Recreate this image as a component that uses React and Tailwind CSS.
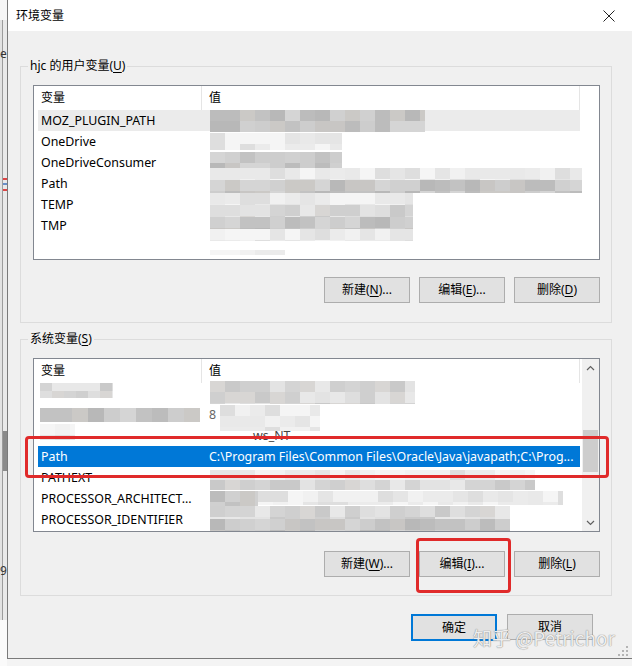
import React from 'react';

const PALETTES = {
  dark: ['#c2c2c2', '#cdcdcd', '#d5d5d5', '#bcbcbc', '#c8c6c4', '#d0d0d0', '#b8b8b8', '#cbc9c6'],
  mid: ['#d4d4d4', '#dedede', '#cfcfcf', '#e3e3e3', '#d8d6d4', '#e8e8e8', '#c9c9c9'],
  light: ['#ebebeb', '#f1f1f1', '#e5e5e5', '#f5f5f5', '#e9e9e9', '#dedede'],
};

// pixelated blur patch, lies over the list content
function Mosaic({ x, y, w, h, cw = 15, ch = 11, seed = 1, tone = 'mid' }) {
  const pal = PALETTES[tone];
  const cols = Math.ceil(w / cw);
  const rows = Math.ceil(h / ch);
  let s = seed * 7919;
  const next = () => {
    s = (s * 9301 + 49297) % 233280;
    return s / 233280;
  };
  const cells = [];
  for (let i = 0; i < cols * rows; i++) cells.push(pal[Math.floor(next() * pal.length)]);
  return (
    <div
      className="absolute grid overflow-hidden pointer-events-none"
      style={{ left: x, top: y, width: w, height: h, gridTemplateColumns: `repeat(${cols}, ${cw}px)`, gridAutoRows: `${ch}px` }}
    >
      {cells.map((c, i) => (
        <div key={i} style={{ background: c }} />
      ))}
    </div>
  );
}

function Key({ children }) {
  return <span className="underline underline-offset-[2px] decoration-[1px]">{children}</span>;
}

function Btn({ children, def }) {
  return (
    <div
      className={`w-[86px] h-[26px] flex items-center justify-center text-[12px] text-black bg-[#e1e1e1] ${
        def ? 'border-2 border-[#0078d7] h-[27px]' : 'border border-[#adadad]'
      }`}
    >
      {children}
    </div>
  );
}

function Header() {
  return (
    <div className="flex h-[24px] text-[12px] text-black">
      <div className="w-[168px] pl-[7px] flex items-center border-r border-[#e5e5e5]">变量</div>
      <div className="w-[378px] pl-[7px] flex items-center border-r border-[#e5e5e5]">值</div>
    </div>
  );
}

function Row({ name, value, selected, hover }) {
  return (
    <div
      className={`flex h-[21px] items-center ml-[4px] w-[542px] text-[12.4px] ${
        selected ? 'bg-[#0078d7] text-white' : hover ? 'bg-[#ebebeb] text-black' : 'text-black'
      }`}
    >
      <div className="w-[171px] pl-[3px] pt-[1px] whitespace-nowrap overflow-hidden">{name}</div>
      <div className="flex-1 pt-[1px] whitespace-nowrap overflow-hidden">{value}</div>
    </div>
  );
}

function Chevron({ up }) {
  return (
    <svg width="9" height="6" viewBox="0 0 9 6" fill="none" stroke="#606060" strokeWidth="1.2">
      {up ? <polyline points="1,5 4.5,1.5 8,5" /> : <polyline points="1,1 4.5,4.5 8,1" />}
    </svg>
  );
}

const USER_VARS = ['MOZ_PLUGIN_PATH', 'OneDrive', 'OneDriveConsumer', 'Path', 'TEMP', 'TMP'];

const SYS_VARS = [
  { name: '', value: '' },
  { name: '', value: <span className="text-[#666]">8</span> },
  { name: '', value: <span className="pl-[44px] text-[#444]">ws_NT</span> },
  { name: 'Path', value: 'C:\\Program Files\\Common Files\\Oracle\\Java\\javapath;C:\\Prog...', selected: true },
  { name: 'PATHEXT', value: '' },
  { name: 'PROCESSOR_ARCHITECT...', value: '' },
  { name: 'PROCESSOR_IDENTIFIER', value: '' },
];

function Group({ label, children, className }) {
  return (
    <fieldset className={`border border-[#dcdcdc] pl-[12px] pr-[11px] pt-[11px] ${className}`}>
      <legend className="-ml-[5px] px-[2px] text-[12px] leading-[16px] text-black">{label}</legend>
      {children}
    </fieldset>
  );
}

export default function App() {
  return (
    <div className="relative w-[632px] h-[666px] overflow-hidden flex bg-[#f4f4f4] font-['Noto_Sans','Noto_Sans_CJK_SC',sans-serif]">
      {/* window behind the dialog */}
      <div className="w-[7px] h-[666px] flex flex-col overflow-hidden">
        <div className="h-[20px] bg-[#f6f6f6]" />
        <div className="flex-1 flex">
          <div className="w-[2px] bg-[#e2e2e2]" />
          <div className="w-[1px] bg-[#9c9c9c]" />
          <div className="flex-1 flex flex-col bg-[#e9e9e9] text-[12px] leading-none text-[#333]">
            <div className="h-[28px]" />
            <div className="-ml-[3px]">e</div>
            <div className="h-[118px]" />
            <div className="h-[2px] bg-[#d44]" />
            <div className="h-[3px]" />
            <div className="h-[2px] bg-[#6a8fc8]" />
            <div className="h-[4px]" />
            <div className="h-[2px] bg-[#d44]" />
            <div className="h-[240px]" />
            <div className="h-[40px] bg-[#8a8a8a]" />
            <div className="h-[94px]" />
            <div className="-ml-[3px]">9</div>
          </div>
        </div>
        <div className="h-[46px] bg-[#fafafa]" />
      </div>

      {/* dialog */}
      <div className="w-[625px] h-[659px] flex flex-col border-l border-b border-[#7a7a7a] bg-[#f0f0f0]">
        <div className="h-[31px] bg-white flex items-center justify-between pl-[8px] pr-[17px] shrink-0">
          <span className="text-[12px] text-black">环境变量</span>
          <svg width="12" height="12" viewBox="0 0 12 12" stroke="#222" strokeWidth="1">
            <line x1="0.5" y1="0.5" x2="11.5" y2="11.5" />
            <line x1="11.5" y1="0.5" x2="0.5" y2="11.5" />
          </svg>
        </div>

        <div className="flex-1 flex flex-col pt-[27px] pl-[12px] pr-[20px]">
          <Group label={<>hjc 的用户变量(<Key>U</Key>)</>} className="pb-[19px]">
            <div className="relative h-[175px] border border-[#828790] bg-white overflow-hidden">
              <Header />
              {USER_VARS.map((v, i) => (
                <Row key={v} name={v} hover={i === 0} />
              ))}
              <Mosaic x={176} y={24} w={215} h={22} seed={3} tone="dark" />
              <Mosaic x={176} y={47} w={132} h={17} seed={5} tone="light" />
              <Mosaic x={176} y={66} w={132} h={16} seed={7} tone="dark" />
              <Mosaic x={176} y={82} w={372} h={12} seed={9} tone="light" />
              <Mosaic x={176} y={94} w={372} h={13} seed={11} tone="dark" />
              <Mosaic x={176} y={107} w={203} h={12} seed={13} tone="light" />
              <Mosaic x={176} y={119} w={203} h={12} seed={15} tone="mid" />
              <Mosaic x={176} y={131} w={203} h={12} seed={17} tone="dark" />
              <Mosaic x={176} y={143} w={203} h={12} seed={19} tone="light" />
              <Mosaic x={176} y={164} w={75} h={5} seed={21} tone="light" />
            </div>
            <div className="flex justify-end gap-[9px] mt-[17px]">
              <Btn>新建(<Key>N</Key>)...</Btn>
              <Btn>编辑(<Key>E</Key>)...</Btn>
              <Btn>删除(<Key>D</Key>)</Btn>
            </div>
          </Group>

          <Group label={<>系统变量(<Key>S</Key>)</>} className="mt-[8px] pb-[18px]">
            <div className="relative h-[174px] border border-[#828790] bg-white overflow-hidden flex">
              <div className="relative flex-1">
                <Header />
                {SYS_VARS.map((v, i) => (
                  <Row key={i} name={v.name} value={v.value} selected={v.selected} />
                ))}
                <Mosaic x={6} y={24} w={73} h={15} cw={12} ch={8} seed={23} tone="mid" />
                <Mosaic x={176} y={22} w={205} h={23} seed={25} tone="mid" />
                <Mosaic x={6} y={49} w={160} h={14} cw={16} ch={14} seed={27} tone="dark" />
                <Mosaic x={6} y={65} w={35} h={16} seed={29} tone="light" />
                <Mosaic x={186} y={46} w={100} h={26} seed={31} tone="light" />
                <Mosaic x={176} y={111} w={325} h={10} seed={33} tone="light" />
                <Mosaic x={176} y={121} w={325} h={10} seed={35} tone="mid" />
                <Mosaic x={176} y={132} w={48} h={15} seed={37} tone="dark" />
                <Mosaic x={224} y={132} w={305} h={14} seed={39} tone="light" />
                <Mosaic x={176} y={147} w={300} h={13} seed={41} tone="mid" />
                <Mosaic x={176} y={160} w={300} h={12} seed={43} tone="dark" />
              </div>
              <div className="w-[17px] flex flex-col items-center bg-[#f0f0f0]">
                <div className="h-[17px] flex items-center justify-center">
                  <Chevron up />
                </div>
                <div className="flex-1 w-full flex justify-center">
                  <div className="mt-[54px] w-[15px] h-[42px] bg-[#cdcdcd]" />
                </div>
                <div className="h-[17px] flex items-center justify-center">
                  <Chevron />
                </div>
              </div>
            </div>
            <div className="flex justify-end gap-[9px] mt-[19px]">
              <Btn>新建(<Key>W</Key>)...</Btn>
              <Btn>编辑(<Key>I</Key>)...</Btn>
              <Btn>删除(<Key>L</Key>)</Btn>
            </div>
          </Group>

          <div className="flex justify-end gap-[10px] mt-[18px] pr-[19px]">
            <Btn def>确定</Btn>
            <Btn>取消</Btn>
          </div>
        </div>
      </div>

      {/* annotation boxes drawn over the screenshot */}
      <div className="absolute left-[25px] top-[436px] w-[584px] h-[42px] border-[3px] border-[#e02a2a] rounded-[4px]" />
      <div className="absolute left-[416px] top-[538px] w-[95px] h-[55px] border-[3px] border-[#e02a2a] rounded-[4px]" />

      {/* watermark */}
      <div className="absolute left-[473px] top-[626px] whitespace-nowrap text-[19px] leading-[24px] text-white/85 font-['Noto_Sans_CJK_SC','Noto_Sans',sans-serif] [text-shadow:0_0_1px_#8a8a8a,0_0_1px_#8a8a8a]">
        知乎 @Petrichor
      </div>

      {/* resize grip */}
      <svg className="absolute left-[617px] top-[645px]" width="12" height="12" viewBox="0 0 12 12" fill="#b4b4b4">
        <rect x="9" y="1" width="2" height="2" />
        <rect x="9" y="5" width="2" height="2" />
        <rect x="5" y="5" width="2" height="2" />
        <rect x="9" y="9" width="2" height="2" />
        <rect x="5" y="9" width="2" height="2" />
        <rect x="1" y="9" width="2" height="2" />
      </svg>
    </div>
  );
}
